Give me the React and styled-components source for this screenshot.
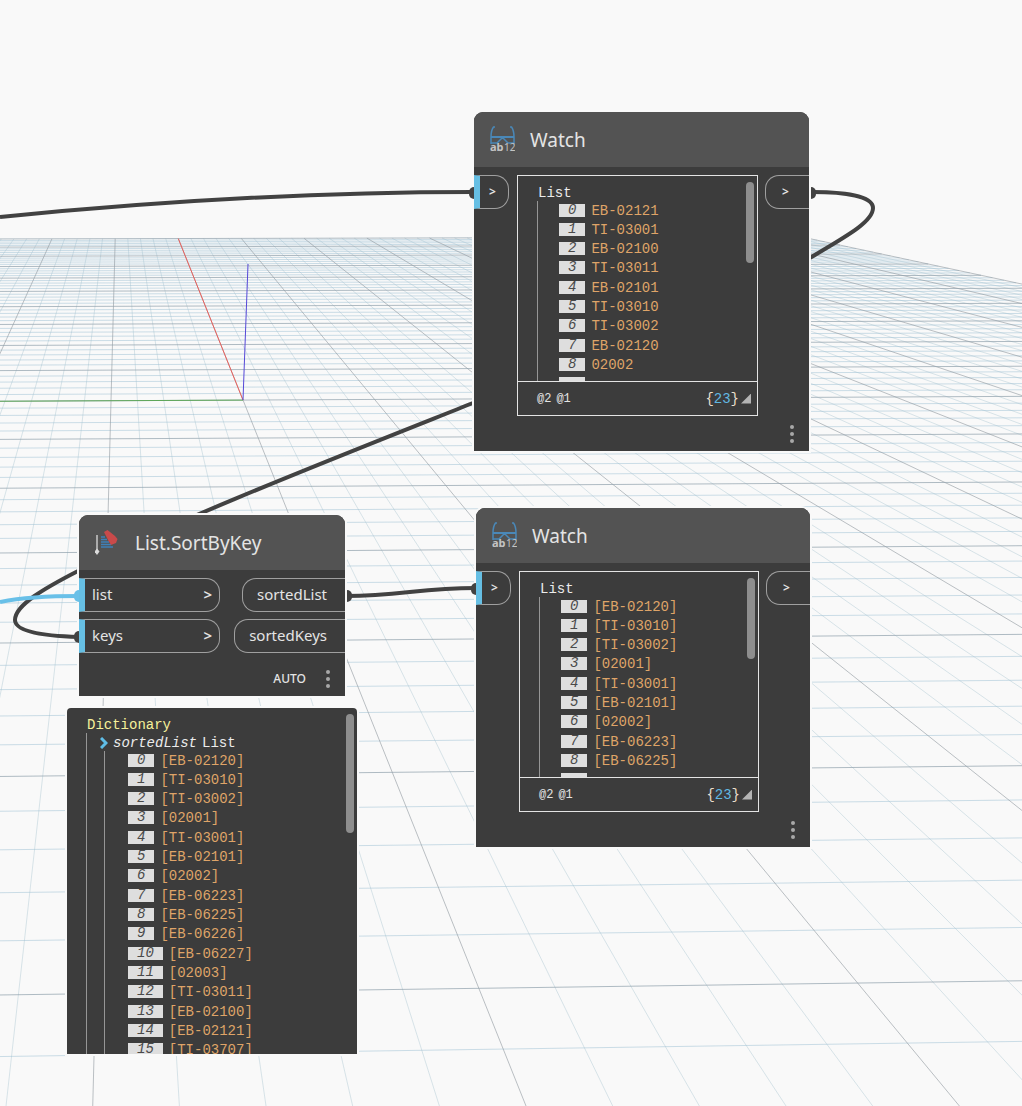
import React from "react";
import styled, { createGlobalStyle, css } from "styled-components";

const sortedItems = [
  "[EB-02120]",
  "[TI-03010]",
  "[TI-03002]",
  "[02001]",
  "[TI-03001]",
  "[EB-02101]",
  "[02002]",
  "[EB-06223]",
  "[EB-06225]",
  "[EB-06226]",
  "[EB-06227]",
  "[02003]",
  "[TI-03011]",
  "[EB-02100]",
  "[EB-02121]",
  "[TI-03707]",
];

const keyItems = [
  "EB-02121",
  "TI-03001",
  "EB-02100",
  "TI-03011",
  "EB-02101",
  "TI-03010",
  "TI-03002",
  "EB-02120",
  "02002",
];

// Ground plane seen in perspective: every line of one family meets at
// (VANISH_X, HORIZON), the other family runs almost level.
const HORIZON = 90.7;
const VANISH_X = 119;
const DEPTH = 2837.6;
const TILT = 0.0436;
const FAR = 16;
const RIGHT = 11;

const project = (j, k) => {
  const slope = -0.0259 + 0.4268 * j;
  const w = k + 3.138;
  const x =
    (VANISH_X + (slope * DEPTH) / w) / (1 + (slope * TILT) / w);
  return [x, HORIZON + (DEPTH - TILT * x) / w];
};

const segment = (from, to) => {
  const [x1, y1] = project(...from);
  const [x2, y2] = project(...to);
  return `M${x1.toFixed(1)} ${y1.toFixed(1)}L${x2.toFixed(1)} ${y2.toFixed(1)}`;
};

const buildGrid = () => {
  const grid = { rowMinor: "", rowMajor: "", colMinor: "", colMajor: "" };
  for (let n = -4; n <= FAR * 5; n++) {
    const key = n % 5 === 0 ? "rowMajor" : "rowMinor";
    grid[key] += segment([-9, n / 5], [RIGHT, n / 5]);
  }
  for (let n = -45; n <= RIGHT * 5; n++) {
    const key = n % 5 === 0 ? "colMajor" : "colMinor";
    grid[key] += segment([n / 5, FAR], [n / 5, -2]);
  }
  return grid;
};

const grid = buildGrid();

const Background = () => (
  <Backdrop aria-hidden="true">
    <g fill="none">
      <path d={grid.colMinor} stroke="#9fbccb" strokeOpacity="0.38" />
      <path d={grid.rowMinor} stroke="#9cc0d4" strokeOpacity="0.5" />
      <path d={grid.colMajor} stroke="#8f989e" strokeOpacity="0.6" />
      <path d={grid.rowMajor} stroke="#8fa0ab" strokeOpacity="0.7" />
      <path d={segment([1, 6], [1, FAR])} stroke="#e8605c" />
      <path d={segment([-9, 6], [1, 6])} stroke="#5da658" />
      <path d="M243 400L248 264" stroke="#5548d8" />
    </g>
    <g fill="none" stroke="#424242" strokeWidth="4">
      <path d="M0 217C150 202 300 192 474 192" />
      <path d="M812 192C845 192 873 196 873 208C873 222 845 237 808 259C700 315 600 350 473 403C350 452 150 530 78 571C45 588 15 605 15 620C15 632 45 636 79 637" />
      <path d="M346 596C400 596 420 588 476 588" />
      <path d="M0 602C25 597 50 596 79 596" stroke="#69c0e8" />
    </g>
  </Backdrop>
);

const GlassesIcon = () => (
  <svg width="25" height="28" viewBox="0 0 25 28" aria-hidden="true">
    <g fill="none" stroke="#4a88b8">
      <path
        d="M5 1H3.500C2 3 1 7 1 11V18M20 1H21.500C23 3 24 7 24 11V18"
        strokeWidth="1.5"
      />
      <path d="M1 11H24" strokeWidth="2" />
      <path
        d="M1 17H7L12.500 11.500L18 17H24"
        strokeWidth="1.5"
      />
    </g>
    <IconText x="0" y="25" $bold>
      ab
    </IconText>
    <IconText x="14" y="25">
      12
    </IconText>
  </svg>
);

const SortIcon = () => (
  <svg width="25" height="28" viewBox="0 0 25 28" aria-hidden="true">
    <path d="M2 6V24" stroke="#c9c9c9" strokeWidth="1.5" />
    <path d="M2 19.500L4.500 22.500L2 26L-0.500 22.500Z" fill="#dcdcdc" />
    <path
      d="M6 8H10M6 10.500H12M6 13H14M6 15.500H16M6 18H18"
      stroke="#3f80b8"
      strokeWidth="1.5"
    />
    <path
      d="M9 3L12.500 1L20 7L22.500 10L21 14L16 16L13 11Z"
      fill="#c94a4a"
    />
  </svg>
);

const Items = ({ items, peek, ...rest }) => (
  <Branch {...rest}>
    {items.map((item, index) => (
      <Item key={index}>
        <Index>{index}</Index>
        <span>{item}</span>
      </Item>
    ))}
    {peek && (
      <Item aria-hidden="true">
        <Index />
      </Item>
    )}
  </Branch>
);

const MoreButton = () => (
  <More type="button" aria-label="Node options">
    <i />
    <i />
    <i />
  </More>
);

const WatchNode = ({ items, ...place }) => (
  <Node {...place}>
    <Header>
      <GlassesIcon />
      <h2>Watch</h2>
    </Header>
    <WatchBody>
      <InPort $compact>
        <Chevron type="button" aria-label="Input">
          &gt;
        </Chevron>
      </InPort>
      <WatchBox>
        <Tree $height={205}>
          <Heading>List</Heading>
          <Items items={items} $indent={21} peek />
          <Thumb $height={81} />
        </Tree>
        <Summary>
          <Levels>
            <span>@2</span>
            <span>@1</span>
          </Levels>
          <Count>
            {"{"}
            <b>23</b>
            {"}"}
          </Count>
          <Grip />
        </Summary>
      </WatchBox>
      <OutPort $compact $linked={place.$linked}>
        <Chevron type="button" aria-label="Output">
          &gt;
        </Chevron>
      </OutPort>
    </WatchBody>
    <Footer>
      <MoreButton />
    </Footer>
  </Node>
);

const SortNode = (place) => (
  <Node {...place}>
    <Header>
      <SortIcon />
      <h2>List.SortByKey</h2>
    </Header>
    <Ports>
      <PortRow>
        <InPort $blue>
          <span>list</span>
          <Chevron type="button" aria-label="list options" $large>
            &gt;
          </Chevron>
        </InPort>
        <OutPort $linked>sortedList</OutPort>
      </PortRow>
      <PortRow>
        <InPort>
          <span>keys</span>
          <Chevron type="button" aria-label="keys options" $large>
            &gt;
          </Chevron>
        </InPort>
        <OutPort>sortedKeys</OutPort>
      </PortRow>
    </Ports>
    <Footer>
      <span>AUTO</span>
      <MoreButton />
    </Footer>
  </Node>
);

const Preview = () => (
  <PreviewPanel>
    <Tree $height={346}>
      <Heading $yellow>Dictionary</Heading>
      <Branch $indent={17}>
        <li>
          <Entry>
            <svg width="8" height="12" viewBox="0 0 8 12" aria-hidden="true">
              <path
                d="M1 1L6 6L1 11"
                fill="none"
                stroke="#5fbde6"
                strokeWidth="3"
              />
            </svg>
            <em>sortedList</em>
            <span>List</span>
          </Entry>
          <Items items={sortedItems} $indent={23} />
        </li>
      </Branch>
      <Thumb $height={119} />
    </Tree>
  </PreviewPanel>
);

const App = () => {
  return (
    <Workspace>
      <GlobalStyle />
      <Background />
      <WatchNode items={keyItems} $x={474} $y={112} $width={335} $linked />
      <WatchNode items={sortedItems.slice(0, 9)} $x={476} $y={508} $width={334} />
      <SortNode $x={79} $y={515} $width={266} />
      <Preview />
    </Workspace>
  );
};

const GlobalStyle = createGlobalStyle`
  * {
    box-sizing: border-box;
  }
  body {
    margin: 0;
    background: #f9f9f9;
    font-family: "Noto Sans", "Open Sans", sans-serif;
  }
  h2, ul {
    margin: 0;
    padding: 0;
  }
  button {
    padding: 0;
    border: 0;
    background: none;
    color: inherit;
    font: inherit;
    cursor: pointer;
  }
`;

const Workspace = styled.main`
  position: relative;
  min-height: 100vh;
  overflow: hidden;
`;

const Backdrop = styled.svg`
  position: absolute;
  inset: 0;
  width: 100%;
  height: 100%;
`;

const Node = styled.section`
  position: absolute;
  left: ${({ $x }) => $x}px;
  top: ${({ $y }) => $y}px;
  width: ${({ $width }) => $width}px;
  border-radius: 9px 9px 0 0;
  background: #3c3c3c;
  color: #e4e4e4;
  box-shadow: 0 0 0 2px #f9f9f9;
`;

const Header = styled.header`
  display: flex;
  align-items: center;
  gap: 15px;
  height: 55px;
  padding: 1px 16px 0;
  border-radius: 9px 9px 0 0;
  background: #535353;
  h2 {
    font-size: 19px;
    font-weight: 400;
    line-height: 26px;
  }
`;

const IconText = styled.text`
  fill: #c4c4c4;
  font-size: ${({ $bold }) => ($bold ? 11 : 10)}px;
  font-weight: ${({ $bold }) => ($bold ? 700 : 400)};
`;

const WatchBody = styled.div`
  display: flex;
  align-items: flex-start;
  gap: 7px;
  padding-top: 8px;
`;

const Ports = styled.div`
  display: flex;
  flex-direction: column;
  gap: 7px;
  padding-top: 8px;
`;

const PortRow = styled.div`
  display: flex;
  justify-content: space-between;
`;

const portBase = css`
  position: relative;
  display: flex;
  align-items: center;
  height: 34px;
  border: 1px solid #a0a0a0;
  font-size: 15px;
  line-height: 20px;
  &::after {
    content: "";
    position: absolute;
    top: 11px;
    width: 5px;
    height: 12px;
    background: #424242;
  }
`;

const InPort = styled.div`
  ${portBase}
  justify-content: space-between;
  width: ${({ $compact }) => ($compact ? 35 : 141)}px;
  padding: ${({ $compact }) => ($compact ? "0 9px" : "0 7px 2px")};
  border-left: 6px solid #66bfe4;
  border-radius: 0 14px 14px 0;
  &::after {
    left: -11px;
    border-radius: 6px 0 0 6px;
    background: ${({ $blue }) => ($blue ? "#69c0e8" : "#424242")};
  }
`;

const OutPort = styled.div`
  ${portBase}
  justify-content: center;
  width: ${({ $compact }) => ($compact ? "44px" : "auto")};
  padding: ${({ $compact }) => ($compact ? "0 4px 0 0" : "0 18px 2px 14px")};
  border-right: 0;
  border-radius: 14px 0 0 14px;
  &::after {
    right: -7px;
    border-radius: 0 6px 6px 0;
    display: ${({ $linked }) => ($linked ? "block" : "none")};
  }
`;

const Chevron = styled.button`
  font-size: ${({ $large }) => ($large ? 15 : 12)}px;
  font-weight: 600;
  line-height: 16px;
`;

const WatchBox = styled.div`
  flex: 1;
  margin-left: 1px;
  border: 1px solid #e4e4e4;
`;

const Tree = styled.div`
  position: relative;
  height: ${({ $height }) => $height}px;
  padding: 7px 0 0 19px;
  overflow: hidden;
  font-family: "Liberation Mono", monospace;
  font-size: 14px;
  line-height: 16px;
`;

const Heading = styled.div`
  padding: 2px 0 0 1px;
  color: ${({ $yellow }) => ($yellow ? "#f6f09a" : "#ececec")};
`;

const Branch = styled.ul`
  padding-left: ${({ $indent }) => $indent}px;
  border-left: 1px solid #969696;
  list-style: none;
`;

const Entry = styled.div`
  display: flex;
  align-items: center;
  gap: 5px;
  margin-left: -4px;
  padding-top: 2px;
`;

const Item = styled.li`
  display: flex;
  align-items: center;
  gap: 6px;
  height: 19px;
  color: #dfa468;
  &:nth-child(3n + 4) {
    margin-bottom: 1px;
  }
`;

const Index = styled.span`
  min-width: 26px;
  height: 13px;
  padding: 0 9px;
  background: #dedede;
  color: #4a4a4a;
  font-style: italic;
  line-height: 13px;
`;

const Thumb = styled.div`
  position: absolute;
  top: 6px;
  right: 3px;
  width: 8px;
  height: ${({ $height }) => $height}px;
  border-radius: 4px;
  background: #8e8e8e;
`;

const Summary = styled.div`
  display: flex;
  align-items: center;
  height: 34px;
  padding: 0 6px 0 19px;
  border-top: 1px solid #e4e4e4;
  font-family: "Liberation Mono", monospace;
`;

const Levels = styled.div`
  display: flex;
  flex: 1;
  gap: 5px;
  font-size: 12px;
`;

const Count = styled.span`
  color: #eadfce;
  font-size: 14px;
  b {
    color: #62b8e2;
    font-weight: 400;
  }
`;

const Grip = styled.span`
  width: 10px;
  height: 10px;
  margin-left: 2px;
  background: #b4b4b4;
  clip-path: polygon(100% 0, 100% 100%, 0 100%);
`;

const Footer = styled.footer`
  display: flex;
  align-items: center;
  justify-content: flex-end;
  gap: 20px;
  height: 35px;
  padding: 0 15px;
  font-size: 12px;
  font-weight: 500;
  ${Ports} + & {
    height: 43px;
    padding-top: 8px;
  }
`;

const More = styled.button`
  display: flex;
  flex-direction: column;
  gap: 3px;
  i {
    width: 4px;
    height: 4px;
    border-radius: 50%;
    background: #a8a8a8;
  }
`;

const PreviewPanel = styled.aside`
  position: absolute;
  left: 67px;
  top: 708px;
  width: 290px;
  border-radius: 4px 4px 0 0;
  background: #3c3c3c;
  color: #ececec;
  box-shadow: 0 0 0 2px #f9f9f9;
`;

export default App;
